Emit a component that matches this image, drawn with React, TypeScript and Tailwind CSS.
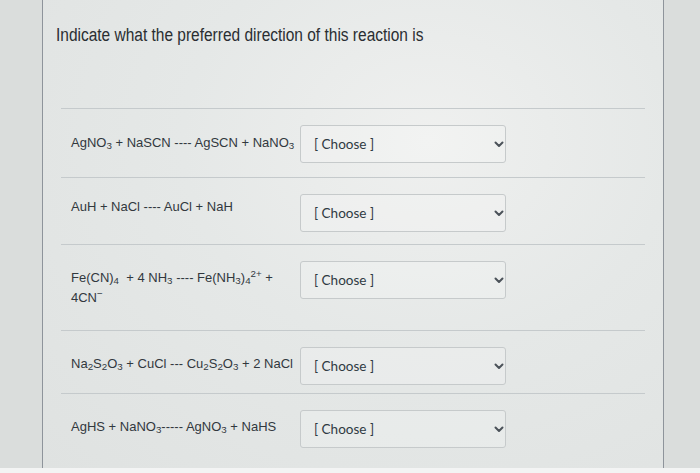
import React from 'react'

function Chevron() {
  return (
    <svg width="10" height="7" viewBox="0 0 10 7" className="shrink-0">
      <polyline points="1.5,1.5 5,5 8.5,1.5" fill="none" stroke="#4b5259" strokeWidth="2" strokeLinecap="round" strokeLinejoin="round" />
    </svg>
  )
}

function ChooseSelect() {
  return (
    <div className="flex h-[38px] w-[206px] shrink-0 items-center justify-between rounded-[3px] border border-[#c6cacb] bg-white/20 pl-[13px] pr-[1px]">
      <span className="font-['Lato','Liberation_Sans',sans-serif] text-[13.5px] text-[#2f3a42]">[ Choose ]</span>
      <Chevron />
    </div>
  )
}

type Row = {
  eq: React.ReactNode
  height: string
  textPad: string
}

const rows: Row[] = [
  {
    eq: (
      <>
        AgNO<sub>3</sub> + NaSCN ---- AgSCN + NaNO<sub>3</sub>
      </>
    ),
    height: 'h-[69px]',
    textPad: 'pt-[8px]',
  },
  {
    eq: <>AuH + NaCl ---- AuCl + NaH</>,
    height: 'h-[67px]',
    textPad: 'pt-[3px]',
  },
  {
    eq: (
      <>
        Fe(CN)<sub>4</sub>&nbsp;&nbsp;+ 4 NH<sub>3</sub> ---- Fe(NH<sub>3</sub>)<sub>4</sub>
        <sup>2+</sup> +
        <br />
        4CN<sup>−</sup>
      </>
    ),
    height: 'h-[86px]',
    textPad: 'pt-[7px]',
  },
  {
    eq: (
      <>
        Na<sub>2</sub>S<sub>2</sub>O<sub>3</sub> + CuCl --- Cu<sub>2</sub>S<sub>2</sub>O<sub>3</sub> + 2 NaCl
      </>
    ),
    height: 'h-[63px]',
    textPad: 'pt-[7px]',
  },
  {
    eq: (
      <>
        AgHS + NaNO<sub>3</sub>----- AgNO<sub>3</sub> + NaHS
      </>
    ),
    height: 'flex-1',
    textPad: 'pt-[7px]',
  },
]

export default function App() {
  return (
    <div className="flex h-[473px] w-full flex-col overflow-hidden bg-[#dadddc]">
      <div className="flex min-h-0 flex-1">
        <div className="ml-[42px] flex w-[622px] flex-col border-x border-[#8e949b] bg-[radial-gradient(ellipse_at_62%_30%,#eff0ef_0%,#e5e8e7_45%,#dfe2e1_100%)] px-[18px]">
          <div className="h-[108px] pt-[23px]">
            <h1 className="-ml-[5px] inline-block origin-left scale-x-[0.86] font-['Liberation_Sans',Arial,sans-serif] text-[18px] leading-[22px] whitespace-nowrap text-[#2a2e32]">
              Indicate what the preferred direction of this reaction is
            </h1>
          </div>

          {rows.map((row, i) => (
            <div key={i} className={`flex items-start border-t border-[#c5cacc] pt-4 ${row.height}`}>
              <div
                className={`w-[239px] shrink-0 pl-[10px] font-['Liberation_Sans',Arial,sans-serif] text-[13px] leading-[20px] whitespace-nowrap text-[#32383e] ${row.textPad}`}
              >
                {row.eq}
              </div>
              <ChooseSelect />
            </div>
          ))}
        </div>
      </div>
      <div className="h-[5px] bg-[#f3f4f4]" />
    </div>
  )
}
